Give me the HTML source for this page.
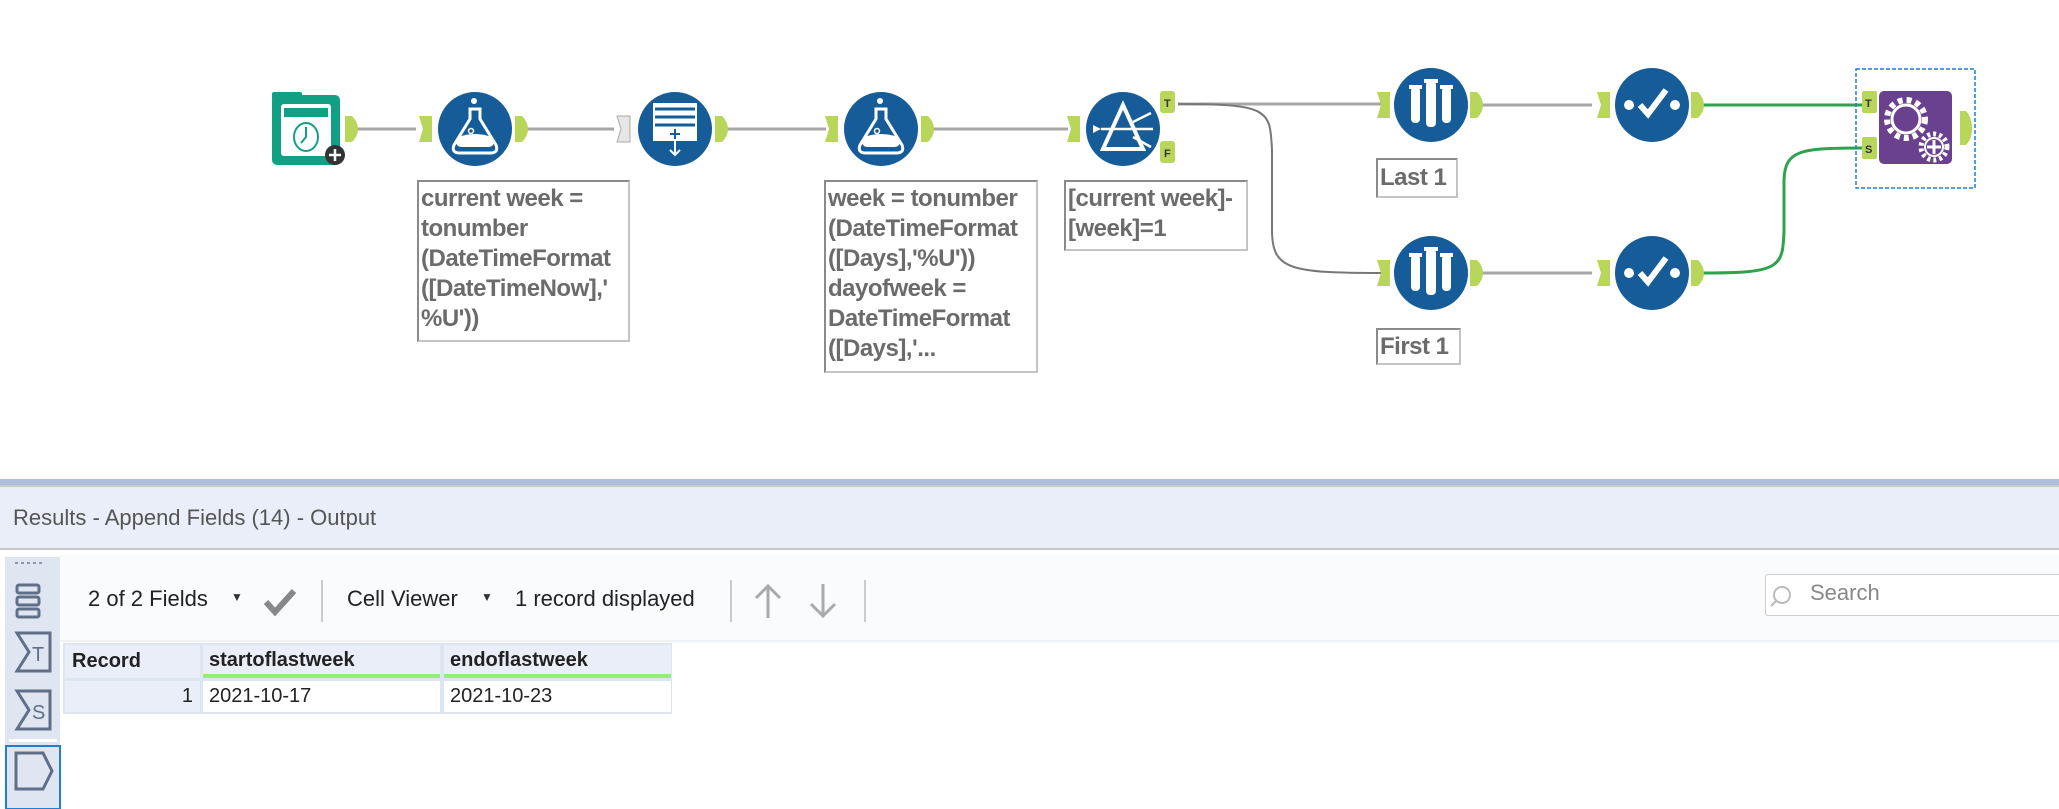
<!DOCTYPE html>
<html><head><meta charset="utf-8"><style>
body{margin:0;width:2059px;height:809px;overflow:hidden;background:#fff;font-family:"Liberation Sans",sans-serif;position:relative}
.ann{position:absolute;border:2px solid #8a8a8a;border-right-color:#c4c4c4;border-bottom-color:#c4c4c4;background:#fff;color:#6b6b6b;font-weight:bold;font-size:24px;line-height:30px;padding:2px 2px;box-sizing:border-box;white-space:nowrap;overflow:hidden;letter-spacing:-0.5px}
.abs{position:absolute}
</style></head><body>
<svg class="abs" style="left:0;top:0" width="2059" height="480">
<defs>
<g id="out"><path d="M0,-13 h7 q6,6 6,13 q0,7 -6,13 h-7z" fill="#b7d65a"/></g>
<g id="in"><path d="M0,-13 h13 v26 h-13 l4,-13z" fill="#b7d65a"/></g>
</defs>
<g stroke="#a6a6a6" stroke-width="3" fill="none">
<line x1="352" y1="129" x2="416" y2="129"/>
<line x1="527" y1="129" x2="614" y2="129"/>
<line x1="727" y1="129" x2="826" y2="129"/>
<line x1="933" y1="129" x2="1068" y2="129"/>
<line x1="1480" y1="105" x2="1592" y2="105"/>
<line x1="1480" y1="273" x2="1592" y2="273"/>
<path d="M1178,104 H1383"/>
</g>
<path d="M1178,104 C1270,104 1270,110 1272,150 V230 C1272,270 1290,273 1383,273" stroke="#777" stroke-width="2" fill="none"/>
<g stroke="#2ea34f" stroke-width="3" fill="none">
<path d="M1703,105 H1864"/>
<path d="M1703,273 C1780,273 1783,268 1784,230 V180 C1785,150 1800,148 1864,148"/>
</g>
<rect x="272" y="95" width="68" height="70" rx="5" fill="#12a085"/>
<rect x="272" y="92" width="30" height="8" rx="2" fill="#12a085"/>
<rect x="281" y="104" width="50" height="52" rx="3" fill="#fff"/>
<rect x="284" y="108" width="44" height="9" fill="#12a085"/>
<ellipse cx="306" cy="137" rx="12" ry="14" fill="none" stroke="#12a085" stroke-width="2"/>
<path d="M306,127 V137 L301,143" stroke="#12a085" stroke-width="2" fill="none"/>
<circle cx="335" cy="155" r="10" fill="#333"/>
<path d="M335,149 v12 M329,155 h12" stroke="#fff" stroke-width="2.5"/>
<use href="#out" x="345" y="129"/>
<g transform="translate(475,129)">
<use href="#in" x="-56" y="0"/>
<circle r="37" fill="#165c98"/>
<path d="M-5,-20 v10 l-16,26 q-3,8 6,8 h30 q9,0 6,-8 l-16,-26 v-10z" fill="none" stroke="#fff" stroke-width="3"/>
<path d="M-17,8 q17,-6 34,0 l2,4 q0,6 -6,6 h-26 q-6,0 -6,-6z" fill="#fff"/>
<circle cx="-1" cy="-28" r="3" fill="#fff"/><circle cx="-4" cy="2" r="2.5" fill="none" stroke="#fff" stroke-width="1.5"/>
<use href="#out" x="40" y="0"/>
</g>
<g transform="translate(675,129)">
<path d="M-58,-13 h13 v26 h-13 l4,-13z" fill="#e6e6e6" stroke="#aaa"/>
<circle r="37" fill="#165c98"/>
<rect x="-22" y="-26" width="44" height="38" fill="#fff"/>
<path d="M-20,-20 h40 M-20,-12 h40 M-20,-4 h40" stroke="#165c98" stroke-width="3"/>
<path d="M0,0 v10 M-5,5 h10" stroke="#165c98" stroke-width="2" fill="none"/>
<path d="M0,12 v14 M-5,21 l5,5 l5,-5" stroke="#fff" stroke-width="2" fill="none"/>
<use href="#out" x="40" y="0"/>
</g>
<g transform="translate(881,129)">
<use href="#in" x="-56" y="0"/>
<circle r="37" fill="#165c98"/>
<path d="M-5,-20 v10 l-16,26 q-3,8 6,8 h30 q9,0 6,-8 l-16,-26 v-10z" fill="none" stroke="#fff" stroke-width="3"/>
<path d="M-17,8 q17,-6 34,0 l2,4 q0,6 -6,6 h-26 q-6,0 -6,-6z" fill="#fff"/>
<circle cx="-1" cy="-28" r="3" fill="#fff"/><circle cx="-4" cy="2" r="2.5" fill="none" stroke="#fff" stroke-width="1.5"/>
<use href="#out" x="40" y="0"/>
</g>
<g transform="translate(1123,129)">
<use href="#in" x="-56" y="0"/>
<circle r="37" fill="#165c98"/>
<path d="M0,-24 L-20,20 H20 Z" fill="none" stroke="#fff" stroke-width="4"/>
<path d="M-30,-4 l8,4 l-8,4z" fill="#fff"/>
<path d="M-22,0 H30 M8,-6 L28,-16 M10,8 L28,18" stroke="#fff" stroke-width="2.5"/>
<rect x="37" y="-38" width="15" height="22" rx="3" fill="#b7d65a"/><text x="41" y="-22" font-size="11" font-weight="bold" fill="#333">T</text>
<rect x="37" y="12" width="15" height="22" rx="3" fill="#b7d65a"/><text x="41" y="28" font-size="11" font-weight="bold" fill="#333">F</text>
</g>
<g id="samp" transform="translate(1431,105)">
<use href="#in" x="-54" y="0"/>
<circle r="37" fill="#165c98"/>
<g fill="#fff"><rect x="-20" y="-18" width="9" height="36" rx="4"/><rect x="-5" y="-24" width="10" height="46" rx="4"/><rect x="11" y="-18" width="9" height="36" rx="4"/>
<rect x="-22" y="-20" width="13" height="4"/><rect x="-7" y="-26" width="14" height="4"/><rect x="9" y="-20" width="13" height="4"/></g>
<use href="#out" x="39" y="0"/>
</g>
<g transform="translate(0,168)"><use href="#samp"/></g>
<g id="chk" transform="translate(1652,105)">
<use href="#in" x="-55" y="0"/>
<circle r="37" fill="#165c98"/>
<circle cx="-23" cy="0" r="5" fill="#fff"/><circle cx="23" cy="0" r="5" fill="#fff"/>
<path d="M-12,0 l8,9 l18,-24" stroke="#fff" stroke-width="6" fill="none"/>
<use href="#out" x="39" y="0"/>
</g>
<g transform="translate(0,168)"><use href="#chk"/></g>
<rect x="1856" y="69" width="119" height="119" fill="none" stroke="#1e7fd8" stroke-width="1.5" stroke-dasharray="4,2"/>
<rect x="1862" y="91" width="15" height="22" rx="2" fill="#b7d65a"/><text x="1865" y="107" font-size="11" font-weight="bold" fill="#333">T</text>
<rect x="1862" y="137" width="15" height="22" rx="2" fill="#b7d65a"/><text x="1865" y="153" font-size="11" font-weight="bold" fill="#333">S</text>
<rect x="1879" y="91" width="73" height="73" rx="5" fill="#6a418f"/>
<circle cx="1906" cy="119" r="19" fill="none" stroke="#fff" stroke-width="6" stroke-dasharray="5,4"/>
<circle cx="1906" cy="119" r="14" fill="none" stroke="#fff" stroke-width="3"/>
<circle cx="1934" cy="147" r="13" fill="#6a418f"/>
<circle cx="1934" cy="147" r="13" fill="none" stroke="#fff" stroke-width="5" stroke-dasharray="3,3"/>
<circle cx="1934" cy="147" r="9" fill="none" stroke="#fff" stroke-width="2"/>
<path d="M1934,140 v14 M1927,147 h14" stroke="#fff" stroke-width="3"/>
<path d="M1960,111 h6 q6,6 6,18 q0,10 -6,16 h-6z" fill="#b7d65a"/>
</svg>
<div class="ann" style="left:417px;top:180px;width:213px;height:162px">current week =<br>tonumber<br>(DateTimeFormat<br>([DateTimeNow],'<br>%U'))</div>
<div class="ann" style="left:824px;top:180px;width:214px;height:193px">week = tonumber<br>(DateTimeFormat<br>([Days],'%U'))<br>dayofweek =<br>DateTimeFormat<br>([Days],'...</div>
<div class="ann" style="left:1064px;top:180px;width:184px;height:71px">[current week]-<br>[week]=1</div>
<div class="ann" style="left:1376px;top:158px;width:82px;height:40px;line-height:32px">Last 1</div>
<div class="ann" style="left:1376px;top:328px;width:85px;height:37px;line-height:30px">First 1</div>
<div class="abs" style="left:0;top:479px;width:2059px;height:6px;background:#aebfdc"></div>
<div class="abs" style="left:0;top:485px;width:2059px;height:65px;background:#e9eef8;border-top:2px solid #c9c9c9;border-bottom:2px solid #c6c6c6;box-sizing:border-box"></div>
<div class="abs" style="left:13px;top:505px;font-size:22px;color:#555">Results - Append Fields (14) - Output</div>
<div class="abs" style="left:0;top:550px;width:2059px;height:259px;background:#fff"></div>
<div class="abs" style="left:60px;top:555px;width:1999px;height:85px;background:#fafbfd;border-bottom:2px solid #eef1f6"></div>
<div class="abs" style="left:5px;top:557px;width:55px;height:252px;background:#dfe6f1"></div>
<svg class="abs" style="left:5px;top:560px" width="56" height="249">
<g fill="#8a97ab"><rect x="10" y="2" width="3" height="2"/><rect x="16" y="2" width="3" height="2"/><rect x="22" y="2" width="3" height="2"/><rect x="28" y="2" width="3" height="2"/><rect x="34" y="2" width="3" height="2"/></g>
<g fill="none" stroke="#5f6f88" stroke-width="3"><rect x="12" y="25" width="22" height="8" rx="2"/><rect x="12" y="37" width="22" height="8" rx="2"/><rect x="12" y="49" width="22" height="8" rx="2"/></g>
<path d="M12,73 H45 V111 H12 L24,92z" fill="none" stroke="#5f6f88" stroke-width="3"/><text x="27" y="101" font-size="20" fill="#5f6f88">T</text>
<path d="M12,131 H45 V169 H12 L24,150z" fill="none" stroke="#5f6f88" stroke-width="3"/><text x="27" y="159" font-size="20" fill="#5f6f88">S</text>
<rect x="4" y="179" width="48" height="3" fill="#fff"/>
<rect x="1" y="186" width="54" height="63" fill="#dfe6f1" stroke="#1e7fd8" stroke-width="2"/>
<path d="M11,193 H38 L47,211 L38,229 H11z" fill="none" stroke="#5f6f88" stroke-width="3"/>
</svg>
<div class="abs" style="left:88px;top:586px;font-size:22px;color:#222">2 of 2 Fields</div>
<div class="abs" style="left:231px;top:590px;font-size:12px;color:#333">▼</div>
<svg class="abs" style="left:263px;top:588px" width="34" height="28"><path d="M3,14 l9,10 l19,-21" stroke="#888" stroke-width="6" fill="none"/></svg>
<div class="abs" style="left:321px;top:580px;width:2px;height:42px;background:#ccc"></div>
<div class="abs" style="left:347px;top:586px;font-size:22px;color:#222">Cell Viewer</div>
<div class="abs" style="left:481px;top:590px;font-size:12px;color:#333">▼</div>
<div class="abs" style="left:515px;top:586px;font-size:22px;color:#222">1 record displayed</div>
<div class="abs" style="left:730px;top:580px;width:2px;height:42px;background:#ccc"></div>
<svg class="abs" style="left:750px;top:582px" width="100" height="38"><path d="M18,36 V4 M6,16 L18,4 L30,16 M73,2 V34 M61,22 L73,34 L85,22" stroke="#aaa" stroke-width="3" fill="none"/></svg>
<div class="abs" style="left:864px;top:580px;width:2px;height:42px;background:#ccc"></div>
<div class="abs" style="left:1765px;top:574px;width:300px;height:42px;border:1px solid #ccc;border-radius:3px;background:#fff;box-sizing:border-box"></div>
<svg class="abs" style="left:1770px;top:583px" width="28" height="28"><circle cx="12" cy="12" r="8" stroke="#bbb" stroke-width="2" fill="none"/><path d="M6,18 l-5,5" stroke="#bbb" stroke-width="2"/></svg>
<div class="abs" style="left:1810px;top:580px;font-size:22px;color:#888">Search</div>
<div class="abs" style="left:63px;top:643px;width:609px;height:71px;background:#dde5f1"></div>
<div class="abs" style="left:65px;top:645px;width:135px;height:33px;background:#e9eef8;font-size:20px;font-weight:bold;line-height:33px;padding-left:7px;box-sizing:border-box;color:#222">Record</div>
<div class="abs" style="left:203px;top:645px;width:237px;height:33px;background:#e9eef8;border-bottom:4px solid #90ee72;box-sizing:border-box;font-size:20px;font-weight:bold;line-height:30px;padding-left:6px;color:#222">startoflastweek</div>
<div class="abs" style="left:444px;top:645px;width:227px;height:33px;background:#e9eef8;border-bottom:4px solid #90ee72;box-sizing:border-box;font-size:20px;font-weight:bold;line-height:30px;padding-left:6px;color:#222">endoflastweek</div>
<div class="abs" style="left:65px;top:681px;width:135px;height:31px;background:#e9eef8;font-size:20px;line-height:31px;text-align:right;padding-right:7px;box-sizing:border-box;color:#222">1</div>
<div class="abs" style="left:203px;top:681px;width:237px;height:31px;background:#fff;font-size:20px;line-height:31px;padding-left:6px;box-sizing:border-box;color:#222">2021-10-17</div>
<div class="abs" style="left:444px;top:681px;width:227px;height:31px;background:#fff;font-size:20px;line-height:31px;padding-left:6px;box-sizing:border-box;color:#222">2021-10-23</div>
</body></html>
